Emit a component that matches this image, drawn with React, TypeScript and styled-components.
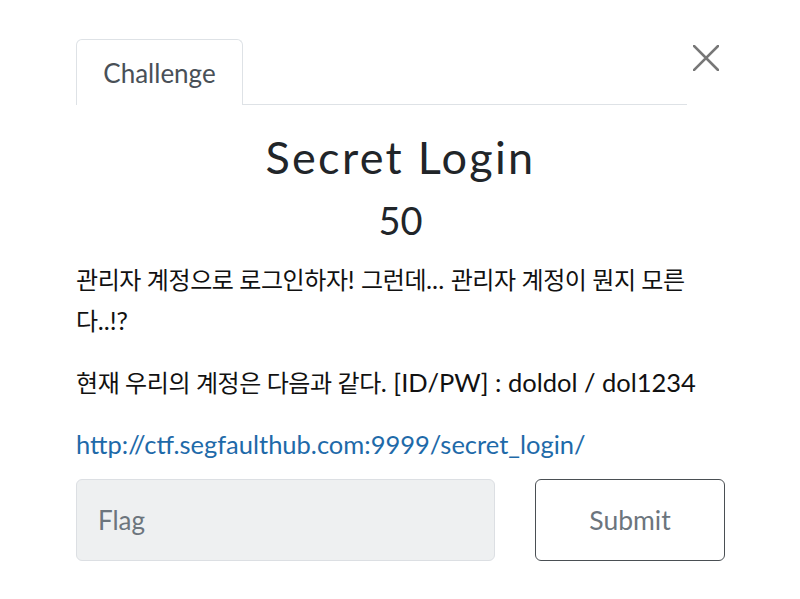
import React from "react";
import styled, { createGlobalStyle } from "styled-components";

const Global = createGlobalStyle`
  html, body { margin: 0; padding: 0; background: #fff; }
  body { font-family: Lato, "Noto Sans CJK KR", sans-serif; color: #212529; }
`;

const Modal = styled.div`
  width: 800px;
  height: 599px;
  box-sizing: border-box;
  padding: 39px 75px 0 76px;
  display: flex;
  flex-direction: column;
`;

const Header = styled.div`
  display: flex;
  align-items: flex-start;
`;

const Tabs = styled.div`
  width: 611px;
  border-bottom: 1px solid #dee2e6;
  display: flex;
`;

const Tab = styled.div`
  width: 167px;
  height: 66px;
  box-sizing: border-box;
  border: 1px solid #dee2e6;
  border-bottom: none;
  border-radius: 6px 6px 0 0;
  margin-bottom: -1px;
  background: #fff;
  display: flex;
  align-items: center;
  justify-content: center;
  font-size: 26px;
  color: #495057;
`;

const Close = styled.button`
  margin: 6px 0 0 6px;
  width: 26px;
  height: 26px;
  padding: 0;
  border: none;
  background: none;
  cursor: pointer;
  display: flex;
`;

const Title = styled.h1`
  margin: 26px 0 0;
  text-align: center;
  font-size: 45px;
  font-weight: 400;
  letter-spacing: 2.3px;
  line-height: 52px;
  color: #212529;
`;

const Points = styled.div`
  margin-top: 14px;
  text-align: center;
  font-size: 38px;
  line-height: 46px;
  color: #212529;
`;

const Para = styled.p<{ $gap?: number }>`
  margin: ${(p) => p.$gap ?? 21}px 0 0;
  font-size: 25.5px;
  line-height: 40px;
  color: #111;
`;

const Ko = styled.span`
  font-size: 24px;
  letter-spacing: -0.4px;
`;

const Link = styled.a`
  color: #1e6aa9;
  text-decoration: none;
`;

const FormRow = styled.div`
  margin-top: 15px;
  display: flex;
  gap: 40px;
`;

const Input = styled.input`
  width: 419px;
  height: 82px;
  box-sizing: border-box;
  background: #eef0f1;
  border: 1px solid #dcdfe3;
  border-radius: 6px;
  padding: 0 21px;
  font-family: Lato, sans-serif;
  font-size: 26px;
  color: #495057;
  outline: none;
  &::placeholder { color: #6c757d; }
`;

const Submit = styled.button`
  width: 190px;
  height: 82px;
  box-sizing: border-box;
  background: #fff;
  border: 1px solid #4a4f54;
  border-radius: 6px;
  font-family: Lato, sans-serif;
  font-size: 26.5px;
  color: #6c757d;
  cursor: pointer;
`;

export default function App() {
  return (
    <>
      <Global />
      <Modal>
        <Header>
          <Tabs>
            <Tab>Challenge</Tab>
          </Tabs>
          <Close aria-label="Close">
            <svg width="26" height="26" viewBox="0 0 26 26">
              <path d="M1 1 L25 25 M25 1 L1 25" stroke="#777" strokeWidth="2.6" strokeLinecap="square" />
            </svg>
          </Close>
        </Header>
        <Title>Secret Login</Title>
        <Points>50</Points>
        <Para $gap={16}>
          <Ko>관리자 계정으로 로그인하자</Ko>! <Ko>그런데</Ko>... <Ko>관리자 계정이 뭔지 모른다</Ko>..!?
        </Para>
        <Para>
          <Ko>현재 우리의 계정은 다음과 같다</Ko>. [ID/PW] : doldol / dol1234
        </Para>
        <Para>
          <Link href="#">http://ctf.segfaulthub.com:9999/secret_login/</Link>
        </Para>
        <FormRow>
          <Input placeholder="Flag" />
          <Submit>Submit</Submit>
        </FormRow>
      </Modal>
    </>
  );
}
